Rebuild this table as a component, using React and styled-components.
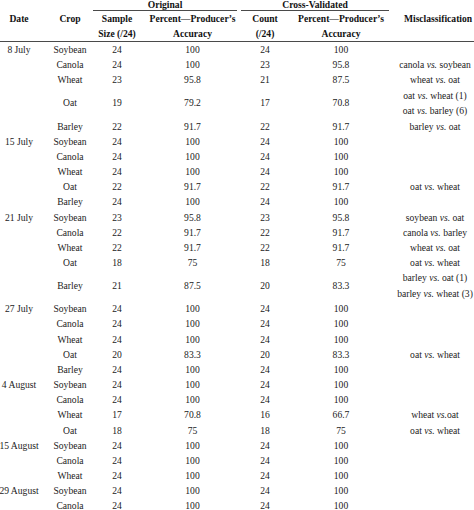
import React, { Fragment } from 'react';
import styled, { createGlobalStyle } from 'styled-components';

const GlobalStyle = createGlobalStyle`
  html, body {
    margin: 0;
    padding: 0;
    background: #fff;
    overflow: hidden;
  }
  body {
    font-family: "Liberation Serif", "Times New Roman", serif;
    font-size: 9.6px;
    color: #222;
  }
`;

const Table = styled.table`
  table-layout: fixed;
  border-collapse: separate;
  border-spacing: 0;
  width: 482px;
  margin-left: -4px;
`;

const GroupCell = styled.th`
  padding: 0;
  font-weight: 700;
  color: #111;
  line-height: 10px;
  text-align: center;
`;

const GroupLabel = styled.div`
  height: 10px;
  margin: 0 3px 0 1px;
  border-bottom: 1px solid #4a4a4a;
  white-space: nowrap;
`;

const HeadCell = styled.th`
  padding: 0 0 0 ${props => props.$shift || 0}px;
  font-weight: 700;
  color: #111;
  line-height: 15px;
  vertical-align: top;
  text-align: center;
  white-space: nowrap;
  border-bottom: 1px solid #4a4a4a;
`;

const Cell = styled.td`
  padding: 0 0 0 ${props => props.$shift || 0}px;
  line-height: 15.17px;
  vertical-align: middle;
  text-align: center;
  white-space: nowrap;
`;

const DateCell = styled(Cell)`
  vertical-align: top;
`;

const MisLine = styled.div`
  line-height: ${props => props.$double ? '15.5px' : '15.17px'};
`;

const Vs = styled.i`
  font-style: italic;
`;

const mis = (a, b, tail = '', tight = false) => (
  <>
    {a} <Vs>vs.</Vs>{tight ? '' : ' '}{b}{tail}
  </>
);

const groups = [
  {
    date: '8 July',
    rows: [
      ['Soybean', 24, '100', 24, '100'],
      ['Canola', 24, '100', 23, '95.8', [mis('canola', 'soybean')]],
      ['Wheat', 23, '95.8', 21, '87.5', [mis('wheat', 'oat')]],
      ['Oat', 19, '79.2', 17, '70.8', [mis('oat', 'wheat', ' (1)'), mis('oat', 'barley', ' (6)')]],
      ['Barley', 22, '91.7', 22, '91.7', [mis('barley', 'oat')]],
    ],
  },
  {
    date: '15 July',
    rows: [
      ['Soybean', 24, '100', 24, '100'],
      ['Canola', 24, '100', 24, '100'],
      ['Wheat', 24, '100', 24, '100'],
      ['Oat', 22, '91.7', 22, '91.7', [mis('oat', 'wheat')]],
      ['Barley', 24, '100', 24, '100'],
    ],
  },
  {
    date: '21 July',
    rows: [
      ['Soybean', 23, '95.8', 23, '95.8', [mis('soybean', 'oat')]],
      ['Canola', 22, '91.7', 22, '91.7', [mis('canola', 'barley')]],
      ['Wheat', 22, '91.7', 22, '91.7', [mis('wheat', 'oat')]],
      ['Oat', 18, '75', 18, '75', [mis('oat', 'wheat')]],
      ['Barley', 21, '87.5', 20, '83.3', [mis('barley', 'oat', ' (1)'), mis('barley', 'wheat', ' (3)')]],
    ],
  },
  {
    date: '27 July',
    rows: [
      ['Soybean', 24, '100', 24, '100'],
      ['Canola', 24, '100', 24, '100'],
      ['Wheat', 24, '100', 24, '100'],
      ['Oat', 20, '83.3', 20, '83.3', [mis('oat', 'wheat')]],
      ['Barley', 24, '100', 24, '100'],
    ],
  },
  {
    date: '4 August',
    rows: [
      ['Soybean', 24, '100', 24, '100'],
      ['Canola', 24, '100', 24, '100'],
      ['Wheat', 17, '70.8', 16, '66.7', [mis('wheat', 'oat', '', true)]],
      ['Oat', 18, '75', 18, '75', [mis('oat', 'wheat')]],
    ],
  },
  {
    date: '15 August',
    rows: [
      ['Soybean', 24, '100', 24, '100'],
      ['Canola', 24, '100', 24, '100'],
      ['Wheat', 24, '100', 24, '100'],
    ],
  },
  {
    date: '29 August',
    rows: [
      ['Soybean', 24, '100', 24, '100'],
      ['Canola', 24, '100', 24, '100'],
    ],
  },
];

const App = () => (
  <>
    <GlobalStyle />
    <Table>
      <colgroup>
        <col style={{ width: 46 }} />
        <col style={{ width: 50 }} />
        <col style={{ width: 50 }} />
        <col style={{ width: 98 }} />
        <col style={{ width: 50 }} />
        <col style={{ width: 102 }} />
        <col style={{ width: 86 }} />
      </colgroup>
      <thead>
        <tr>
          <GroupCell />
          <GroupCell />
          <GroupCell colSpan={2}><GroupLabel>Original</GroupLabel></GroupCell>
          <GroupCell colSpan={2}><GroupLabel>Cross-Validated</GroupLabel></GroupCell>
          <GroupCell />
        </tr>
        <tr>
          <HeadCell>Date</HeadCell>
          <HeadCell $shift={6}>Crop</HeadCell>
          <HeadCell>Sample<br />Size (/24)</HeadCell>
          <HeadCell $shift={3}>Percent—Producer’s<br />Accuracy</HeadCell>
          <HeadCell>Count<br />(/24)</HeadCell>
          <HeadCell>Percent—Producer’s<br />Accuracy</HeadCell>
          <HeadCell $shift={6}>Misclassification</HeadCell>
        </tr>
      </thead>
      <tbody>
        {groups.map(group => (
          <Fragment key={group.date}>
            {group.rows.map(([crop, size, pct, count, cvPct, errors], i) => (
              <tr key={crop}>
                <DateCell>{i === 0 ? group.date : ''}</DateCell>
                <Cell $shift={6}>{crop}</Cell>
                <Cell>{size}</Cell>
                <Cell $shift={3}>{pct}</Cell>
                <Cell>{count}</Cell>
                <Cell>{cvPct}</Cell>
                <Cell>
                  {(errors || []).map((e, k) => (
                    <MisLine key={k} $double={errors.length > 1}>{e}</MisLine>
                  ))}
                </Cell>
              </tr>
            ))}
          </Fragment>
        ))}
      </tbody>
    </Table>
  </>
);

export default App;
